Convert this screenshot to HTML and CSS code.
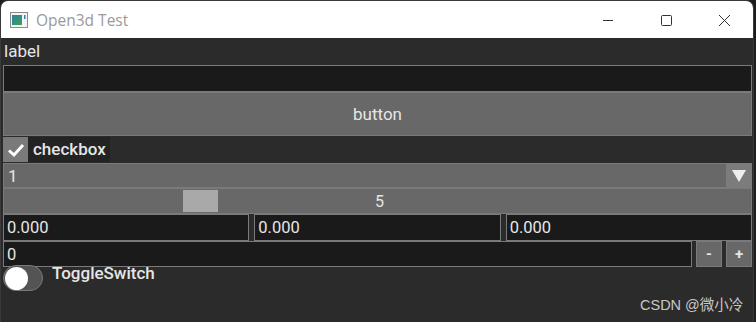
FILE: index.html
```html
<!DOCTYPE html>
<html lang="en">
<head>
  <meta charset="UTF-8">
  <title>Open3d Test</title>
  <link rel="stylesheet" href="styles.css">
</head>
<body>
  <div class="window">
    <div class="titlebar">
      <svg class="app-icon" width="18" height="16" viewBox="0 0 18 16">
        <rect x="0.5" y="0.5" width="17" height="15" fill="#f4f4f4" stroke="#8a8a8a"/>
        <defs>
          <linearGradient id="g" x1="0" y1="0" x2="1" y2="1">
            <stop offset="0" stop-color="#2f7f9a"/>
            <stop offset="1" stop-color="#3aa35a"/>
          </linearGradient>
        </defs>
        <rect x="2" y="3" width="10" height="10" fill="url(#g)"/>
        <rect x="14" y="3" width="1.5" height="4" fill="#3a7fb0"/>
      </svg>
      <span class="title">Open3d Test</span>
      <div class="controls">
        <svg width="46" height="36" viewBox="0 0 46 36"><line x1="18" y1="18.5" x2="28" y2="18.5" stroke="#333" stroke-width="1"/></svg>
        <svg width="46" height="36" viewBox="0 0 46 36"><rect x="18.5" y="13.5" width="10" height="10" rx="1" fill="none" stroke="#333" stroke-width="1"/></svg>
        <svg width="46" height="36" viewBox="0 0 46 36"><path d="M18 13 L29 24 M29 13 L18 24" stroke="#333" stroke-width="1"/></svg>
      </div>
    </div>

    <div class="content">
      <div class="row label-row">label</div>
      <div class="row edit line-edit"></div>
      <div class="row button">button</div>
      <div class="row check-row">
        <span class="checkbox">
          <svg width="20" height="20" viewBox="0 0 20 20"><path d="M3 10.5 L8 15 L17 5" fill="none" stroke="#fff" stroke-width="3"/></svg>
        </span>
        <span class="check-label">checkbox</span>
      </div>
      <div class="row combo">
        <span class="combo-text">1</span>
        <span class="combo-arrow">
          <svg width="14" height="12" viewBox="0 0 14 12"><path d="M0 0 H14 L7 12 Z" fill="#eee"/></svg>
        </span>
      </div>
      <div class="row slider">
        <span class="handle"></span>
        <span class="slider-value">5</span>
      </div>
      <div class="row numbers">
        <div class="edit num">0.000</div>
        <div class="edit num">0.000</div>
        <div class="edit num">0.000</div>
      </div>
      <div class="row int-row">
        <div class="edit num int">0</div>
        <div class="step">-</div>
        <div class="step">+</div>
      </div>
      <div class="row toggle-row">
        <span class="toggle"><span class="knob"></span></span>
        <span class="toggle-label">ToggleSwitch</span>
      </div>
      <div class="watermark">CSDN @微小冷</div>
    </div>
  </div>
</body>
</html>
```

FILE: styles.css
```css
body { margin: 0; background: #1c1c1c; width: 756px; height: 322px; overflow: hidden; }
.window { width: 752px; height: 321px; border: 1px solid #3a3a3a; border-bottom: none; border-radius: 8px 8px 0 0; overflow: hidden; background: #2b2b2b; }
.titlebar { height: 37px; background: #fff; display: flex; align-items: center; }
.app-icon { margin-left: 9px; }
.title { margin-left: 8px; font-family: "Open Sans", "Noto Sans", sans-serif; font-size: 15.5px; color: #9a9a9a; }
.controls { margin-left: auto; display: flex; margin-right: 6px; }
.controls svg { display: block; margin-left: 12px; }
.content { padding: 0 1px 0 2px; display: flex; flex-direction: column; font-family: Roboto, "Noto Sans", sans-serif; font-size: 17px; color: #e6e6e6; position: relative; height: 284px; }
.row { box-sizing: border-box; display: flex; align-items: center; flex-shrink: 0; }
.label-row { height: 26px; padding-left: 1px; }
.edit { background: #1a1a1a; border: 1px solid #7a7a7a; height: 27px; }
.line-edit { margin-top: 1px; }
.button { height: 44px; background: #686868; border: 1px solid #7a7a7a; justify-content: center; }
.check-row { height: 25px; margin-top: 1px; }
.checkbox { width: 25px; height: 25px; background: #7a7a7a; display: flex; align-items: center; justify-content: center; }
.check-label { height: 25px; line-height: 25px; background: #232323; padding: 0 4px 0 5px; font-weight: 500; }
.combo { height: 25px; margin-top: 1px; background: #686868; border: 1px solid #7a7a7a; border-right: none; }
.combo-text { padding-left: 4px; flex: 1; }
.combo-arrow { width: 26px; height: 25px; background: #7c7c7c; display: flex; align-items: center; justify-content: center; margin-top: -1px; margin-bottom: -1px; }
.slider { height: 26px; background: #686868; border: 1px solid #7a7a7a; position: relative; justify-content: center; }
.handle { position: absolute; left: 179px; top: 1px; width: 35px; height: 22px; background: #a9a9a9; }
.slider-value { margin-left: 4px; font-size: 16px; }
.numbers { height: 27px; gap: 5px; }
.num { flex: 1; box-sizing: border-box; display: flex; align-items: center; padding-left: 3px; font-size: 16.5px; }
.int-row { height: 26px; gap: 4px; }
.int { height: 26px; }
.step { width: 26px; height: 26px; box-sizing: border-box; background: #686868; border: 1px solid #7a7a7a; display: flex; align-items: center; justify-content: center; font-size: 15px; font-weight: 700; }
.toggle-row { height: 26px; margin-top: -2px; align-items: flex-start; }
.toggle { width: 40px; height: 26px; box-sizing: border-box; border-radius: 13px; background: #545454; border: 1px solid #7a7a7a; display: flex; align-items: center; padding-left: 1px; }
.knob { width: 23px; height: 23px; border-radius: 50%; background: #fff; }
.toggle-label { margin-left: 9px; font-weight: 500; line-height: 17px; }
.watermark { position: absolute; left: 639px; top: 255px; font-family: "Liberation Sans", "Noto Sans CJK SC", sans-serif; font-size: 14.5px; color: #c8c8c8; }
```
